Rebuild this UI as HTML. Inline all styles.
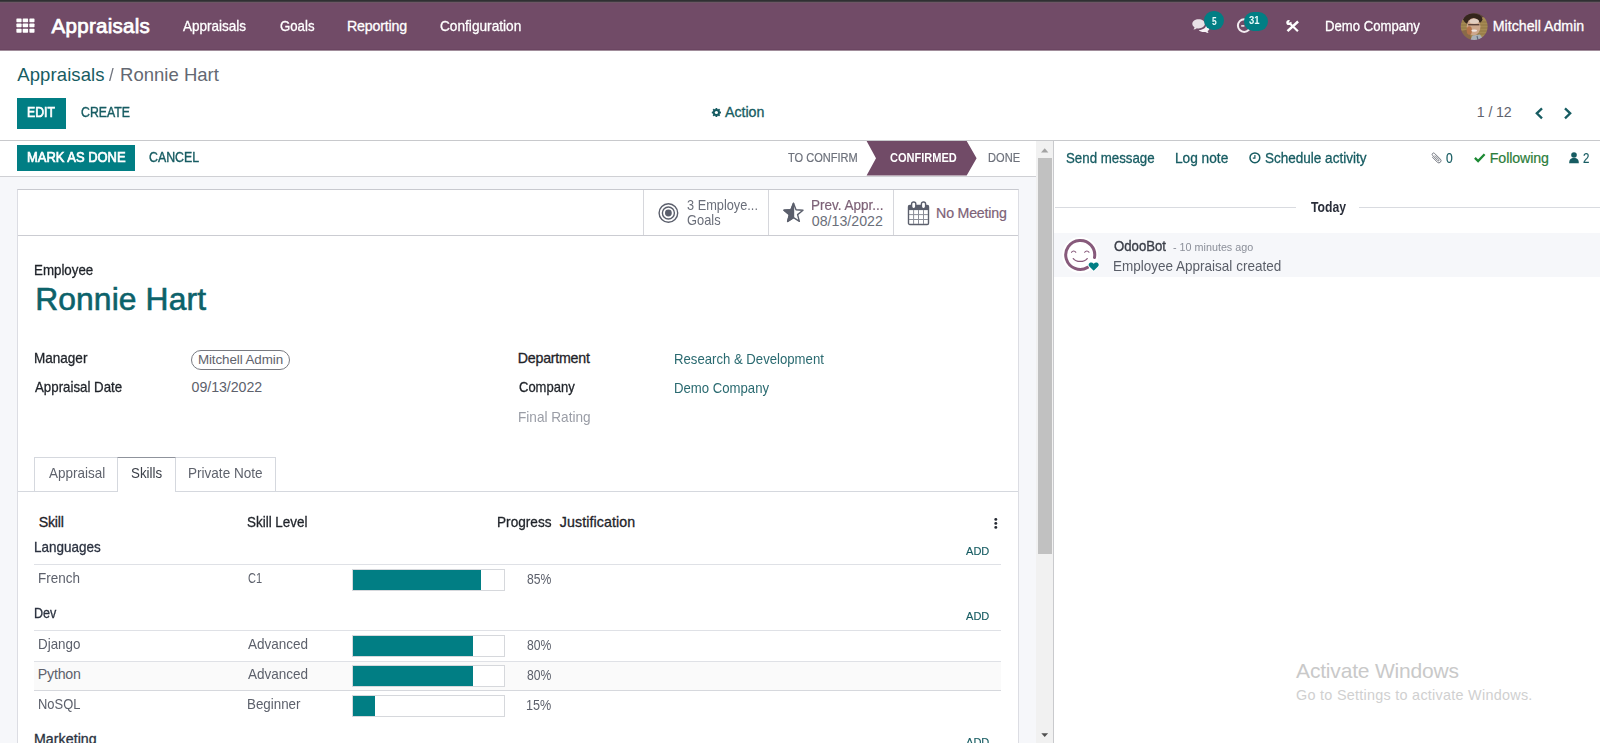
<!DOCTYPE html>
<html lang="en">
<head>
<meta charset="utf-8">
<title>Odoo - Appraisals / Ronnie Hart</title>
<style>

html,body{margin:0;padding:0}
body{position:relative;width:1600px;height:743px;overflow:hidden;background:#fff;
 font-family:"Liberation Sans",sans-serif;font-size:14px;color:#5d616c;}
div,span,a,i,b,button,header,main,aside,section,nav,ul,li,table{box-sizing:border-box}
.abs,.t,svg.ic{position:absolute}
.t{white-space:pre;line-height:1;transform-origin:0 0;margin:0;padding:0;font-weight:400;text-decoration:none;}
.grp{position:absolute;left:0;top:0;width:0;height:0}
#topline{left:0;top:0;width:1600px;height:3px;background:linear-gradient(#2f3032 0,#2f3032 1px,#3f3b41 1px,#3f3b41 2px,#6d5664 2px,#6d5664 3px)}
#navbar{left:0;top:2px;width:1600px;height:48px;background:#714B67;border-bottom:1px solid #6b4561}
#navedge{left:0;top:50px;width:1600px;height:1px;background:#a18d9b}
#cp{left:0;top:50px;width:1600px;height:91px;background:#fff;border-bottom:1px solid #c8c9cc}
#formbg{left:0;top:141px;width:1036px;height:602px;background:#f6f7fa}
#statusbar{left:0;top:141px;width:1036px;height:36px;background:#fff;border-bottom:1px solid #cfd0d4}
#sheet{left:17px;top:189px;width:1002px;height:600px;background:#fff;border:1px solid #dcdde3;border-top-color:#c8c9cf}
#bbox{left:18px;top:190px;width:1000px;height:46px;border-bottom:1px solid #cbccd2}
.vdiv{top:190px;width:1px;height:45px;background:#d6d7dc}
.btn-p{background:#017e84;border:0;border-radius:0;padding:0;margin:0}
.tab{top:457px;height:34px;border:1px solid #d5d8de;border-bottom:0;background:#fff}
.hl{height:1px;background:#dfe1e6}
.pb{left:351.600px;width:153px;height:22px;border:1px solid #d6d8dc;background:#fff}
.pb b{display:block;height:20px;background:#017e84}
#sbar{left:1036px;top:141px;width:17px;height:602px;background:#f1f1f1}
#sthumb{left:1038px;top:158px;width:14px;height:396px;background:#c1c1c1}
#chline{left:1053px;top:141px;width:1px;height:602px;background:#c9cacd}
#chatter{left:1054px;top:141px;width:546px;height:602px;background:#fff}
#msg{left:1054px;top:233px;width:546px;height:44px;background:#f6f7fa}
.pill{left:190.500px;top:350px;width:99.500px;height:19.500px;border:1px solid #787a81;border-radius:10px;background:#fff}
.badge{background:#017e84;border-radius:10px}

</style>
</head>
<body>

<header id="navbar" class="abs"></header>
<div id="topline" class="abs"></div>
<nav id="nav-items" class="grp">
<svg class="ic" style="left:16px;top:18px" width="20" height="16" viewBox="0 0 20 16">
 <g fill="#fff">
  <rect x="0.4" y="0.4" width="5.2" height="3.9" rx="0.700"/><rect x="6.7" y="0.4" width="5.4" height="3.9" rx="0.700"/><rect x="13.4" y="0.4" width="5.1" height="3.9" rx="0.700"/>
  <rect x="0.4" y="5.6" width="5.2" height="3.7" rx="0.700"/><rect x="6.7" y="5.6" width="5.4" height="3.7" rx="0.700"/><rect x="13.4" y="5.6" width="5.1" height="3.7" rx="0.700"/>
  <rect x="0.4" y="10.7" width="5.2" height="4.0" rx="0.700"/><rect x="6.7" y="10.7" width="5.4" height="4.0" rx="0.700"/><rect x="13.4" y="10.7" width="5.1" height="4.0" rx="0.700"/>
 </g>
</svg>
<!-- messaging icon -->
<svg class="ic" style="left:1190.600px;top:17.400px" width="22" height="18" viewBox="0 0 22 18">
 <path fill="#e9e1e7" d="M7.6 2.2c3.5 0 6.3 2 6.3 4.6s-2.8 4.6-6.3 4.6c-.6 0-1.2-.1-1.7-.2-1 .8-2.200 1.300-3.500 1.400.5-.6 1-1.400 1.100-2.300C2.100 9.500 1.300 8.200 1.300 6.800c0-2.600 2.800-4.600 6.300-4.600z"/>
 <path fill="#f7f2f6" d="M15.300 7.400c1.900.7 3.200 2.100 3.200 3.700 0 1.200-.7 2.300-1.900 3 .1.800.5 1.500 1 2-1.200-.1-2.300-.5-3.200-1.200-.5.100-1 .100-1.500.100-2.200 0-4.100-.8-5.100-2.100 4.100.100 7.400-2.200 7.500-5.500z"/>
</svg>
<span class="abs badge" style="left:1203.500px;top:11.300px;width:20px;height:19px"></span>
<!-- activity icon -->
<svg class="ic" style="left:1236px;top:17px" width="17" height="17" viewBox="0 0 17 17">
 <circle cx="8.2" cy="8.6" r="6.3" fill="none" stroke="#f3ecf1" stroke-width="2"/>
 <path d="M8.400 8.900H5.200" fill="none" stroke="#f3ecf1" stroke-width="1.600"/>
</svg>
<span class="abs badge" style="left:1244px;top:12px;width:24px;height:18.5px"></span>
<!-- debug / tools icon -->
<svg class="ic" style="left:1285px;top:19px" width="16" height="15" viewBox="0 0 16 15">
 <path d="M2.500 12.200L13.100 2.500" stroke="#fff" stroke-width="2.500" fill="none"/>
 <path d="M5.400 5L12.900 12.200" stroke="#fff" stroke-width="2.200" fill="none"/>
 <circle cx="3.900" cy="3.500" r="2.600" fill="#fff"/>
 <path d="M3.600 3.700L5.700 -0.300 7.500 2.600z" fill="#714B67"/>
</svg>
<!-- avatar -->
<svg class="ic" style="left:1460px;top:12px" width="29" height="29" viewBox="0 0 29 29">
 <defs>
  <clipPath id="avc"><circle cx="14.200" cy="14.500" r="13.400"/></clipPath>
  <filter id="avb" x="-10%" y="-10%" width="120%" height="120%"><feGaussianBlur stdDeviation="0.700"/></filter>
 </defs>
 <g clip-path="url(#avc)">
  <g filter="url(#avb)">
   <rect x="-2" y="-2" width="33" height="33" fill="#a58a52"/>
   <ellipse cx="13" cy="1.500" rx="16" ry="5" fill="#5e463a"/>
   <path d="M0 10h29M0 13h29M0 16h29M0 19h29M0 22h29" stroke="#8f7543" stroke-width="0.900"/>
   <path d="M-1 20L9 17 12 30H-1z" fill="#8a6a48"/>
   <ellipse cx="12.800" cy="7.200" rx="9.600" ry="5.800" fill="#34251f"/>
   <ellipse cx="13.600" cy="14.600" rx="6.900" ry="8.600" fill="#cda78c"/>
   <ellipse cx="14.200" cy="9.200" rx="4.600" ry="2.500" fill="#e2cec1"/>
   <ellipse cx="9.300" cy="18.500" rx="2.600" ry="4.200" fill="#b4734a"/>
   <path d="M8.200 12.700h11.200" stroke="#5c433b" stroke-width="1.400"/>
   <ellipse cx="14.200" cy="18.600" rx="2.900" ry="1.200" fill="#f1e8e3"/>
   <path d="M9.500 30L12.500 23.500 20 22.500 25 30z" fill="#aab0b6"/>
   <path d="M17 24l1.500 6" stroke="#5d6b7c" stroke-width="1.200"/>
  </g>
 </g>
</svg>
<a class="t" style="left:51.60px;top:16.00px;font-size:20.5px;letter-spacing:0.270px;color:#fff;-webkit-text-stroke:0.75px currentColor">Appraisals</a>
<a class="t" style="left:183.30px;top:19.00px;font-size:14.2px;color:#fff;-webkit-text-stroke:0.3px currentColor;transform:scaleX(0.9523)">Appraisals</a>
<a class="t" style="left:280.30px;top:19.00px;font-size:14.2px;color:#fff;-webkit-text-stroke:0.3px currentColor;transform:scaleX(0.9305)">Goals</a>
<a class="t" style="left:346.90px;top:19.00px;font-size:14.2px;letter-spacing:-0.155px;color:#fff;-webkit-text-stroke:0.3px currentColor">Reporting</a>
<a class="t" style="left:439.90px;top:19.00px;font-size:14.2px;color:#fff;-webkit-text-stroke:0.3px currentColor;transform:scaleX(0.9627)">Configuration</a>
<span class="t" style="left:1211.80px;top:15.50px;font-size:10.5px;font-weight:700;color:#e8fbfb;transform:scaleX(0.7994)">5</span>
<span class="t" style="left:1249.40px;top:15.00px;font-size:10.5px;font-weight:700;color:#e8fbfb;transform:scaleX(0.9031)">31</span>
<span class="t" style="left:1325.37px;top:19.00px;font-size:14.2px;color:#fff;-webkit-text-stroke:0.3px currentColor;transform:scaleX(0.9256)">Demo Company</span>
<span class="t" style="left:1492.80px;top:19.00px;font-size:14.2px;letter-spacing:-0.006px;color:#fff;-webkit-text-stroke:0.3px currentColor">Mitchell Admin</span>
</nav>

<section id="cp" class="abs"></section>
<div id="navedge" class="abs"></div>
<div id="cp-items" class="grp">
<button class="abs btn-p" style="left:17px;top:98px;width:49px;height:31px"></button>
<a class="t" style="left:17.30px;top:65.50px;font-size:18.5px;letter-spacing:0.095px;color:#175c62">Appraisals</a>
<span class="t" style="left:109.20px;top:65.50px;font-size:18.5px;color:#70747e;transform:scaleX(0.9166)">/</span>
<span class="t" style="left:120.10px;top:65.50px;font-size:18.5px;letter-spacing:0.012px;color:#646872">Ronnie Hart</span>
<span class="t" style="left:26.94px;top:105.30px;font-size:14.2px;color:#fff;-webkit-text-stroke:0.7px currentColor;transform:scaleX(0.8622)">EDIT</span>
<span class="t" style="left:80.90px;top:105.30px;font-size:14.2px;color:#175c62;-webkit-text-stroke:0.4px currentColor;transform:scaleX(0.8673)">CREATE</span>
<span class="t" style="left:725.00px;top:104.90px;font-size:14.2px;letter-spacing:-0.029px;color:#175c62;-webkit-text-stroke:0.3px currentColor">Action</span>
<span class="t" style="left:1476.80px;top:104.50px;font-size:14.2px;letter-spacing:-0.122px;color:#5f636d">1 / 12</span>
<svg class="ic" style="left:711px;top:107px" width="11" height="11" viewBox="0 0 11 11">
 <g fill="#175c62">
  <circle cx="5.400" cy="5.500" r="3.500"/>
  <g id="teeth">
   <rect x="4.500" y="0.900" width="1.800" height="9.200" rx="0.300"/>
   <rect x="4.500" y="0.900" width="1.800" height="9.200" rx="0.300" transform="rotate(45 5.400 5.500)"/>
   <rect x="4.500" y="0.900" width="1.800" height="9.200" rx="0.300" transform="rotate(90 5.400 5.500)"/>
   <rect x="4.500" y="0.900" width="1.800" height="9.200" rx="0.300" transform="rotate(135 5.400 5.500)"/>
  </g>
 </g>
 <circle cx="5.400" cy="5.500" r="1.600" fill="#fff"/>
</svg>
<svg class="ic" style="left:1533px;top:106px" width="12" height="15" viewBox="0 0 12 15">
 <path d="M9 2.300L3.800 7.300 9 12.300" fill="none" stroke="#175c62" stroke-width="2.300"/>
</svg>
<svg class="ic" style="left:1562px;top:106px" width="12" height="15" viewBox="0 0 12 15">
 <path d="M3 2.300L8.200 7.300 3 12.300" fill="none" stroke="#175c62" stroke-width="2.300"/>
</svg>
</div>

<main id="formbg" class="abs"></main>
<div id="statusbar" class="abs"></div>
<div id="status-items" class="grp">
<button class="abs btn-p" style="left:17px;top:145px;width:118px;height:26px"></button>
<svg class="ic" style="left:860px;top:141px" width="120" height="35" viewBox="0 0 120 35">
 <path d="M6.600 0H106.700L116.600 17.200 106.700 34.400H6.600L16 17.200z" fill="#714B67"/>
</svg>
<span class="t" style="left:26.89px;top:149.50px;font-size:14.2px;color:#fff;-webkit-text-stroke:0.7px currentColor;transform:scaleX(0.9122)">MARK AS DONE</span>
<span class="t" style="left:149.10px;top:149.50px;font-size:14.2px;color:#175c62;-webkit-text-stroke:0.4px currentColor;transform:scaleX(0.8704)">CANCEL</span>
<span class="t" style="left:788.30px;top:151.80px;font-size:12.6px;color:#6d717b;-webkit-text-stroke:0.2px currentColor;transform:scaleX(0.8780)">TO CONFIRM</span>
<span class="t" style="left:889.90px;top:151.80px;font-size:12.6px;font-weight:700;color:#fff;transform:scaleX(0.8757)">CONFIRMED</span>
<span class="t" style="left:988.42px;top:151.80px;font-size:12.6px;color:#6d717b;-webkit-text-stroke:0.2px currentColor;transform:scaleX(0.8802)">DONE</span>
</div>

<div id="sheet" class="abs"></div>
<div id="bbox" class="abs"></div>
<div id="sheet-items" class="grp">
<span class="abs vdiv" style="left:643px"></span>
<span class="abs vdiv" style="left:768px"></span>
<span class="abs vdiv" style="left:893px"></span>
<!-- goals (bullseye) -->
<svg class="ic" style="left:657px;top:202px" width="23" height="23" viewBox="0 0 23 23">
 <circle cx="11.400" cy="11" r="9.300" fill="none" stroke="#5b5f6c" stroke-width="1.400"/>
 <circle cx="11.400" cy="11" r="6" fill="none" stroke="#5b5f6c" stroke-width="1.400"/>
 <circle cx="11.400" cy="11" r="3.400" fill="#5b5f6c"/>
</svg>
<!-- star half -->
<svg class="ic" style="left:781px;top:200px" width="25" height="24" viewBox="0 0 25 24">
 <path d="M12.50 3.30 L15.03 9.82 L22.01 10.21 L16.59 14.63 L18.38 21.39 L12.50 17.60 L6.62 21.39 L8.41 14.63 L2.99 10.21 L9.97 9.82z" fill="none" stroke="#5b5f6c" stroke-width="1.400" stroke-linejoin="round"/>
 <path d="M12.50 3.30 L12.50 17.60 L6.62 21.39 L8.41 14.63 L2.99 10.21 L9.97 9.82z" fill="#5b5f6c" stroke="#5b5f6c" stroke-width="1.400" stroke-linejoin="round"/>
</svg>
<!-- calendar -->
<svg class="ic" style="left:907px;top:201px" width="24" height="25" viewBox="0 0 24 25">
 <rect x="1.500" y="4.500" width="20" height="19" rx="1.300" fill="#fff" stroke="#5b5f6c" stroke-width="1.400"/>
 <rect x="1.500" y="4.500" width="20" height="4.600" fill="#5b5f6c"/>
 <g stroke="#8b8e98" stroke-width="1">
  <path d="M6.600 9v14M11.500 9v14M16.500 9v14M2 13.600h19M2 18.500h19"/>
 </g>
 <rect x="4.600" y="1" width="4.200" height="6.600" rx="2" fill="#fff" stroke="#5b5f6c" stroke-width="1.400"/>
 <rect x="14.400" y="1" width="4.200" height="6.600" rx="2" fill="#fff" stroke="#5b5f6c" stroke-width="1.400"/>
</svg>
<span class="t" style="left:686.60px;top:197.60px;font-size:14.2px;color:#6b6f7a;transform:scaleX(0.8997)">3 Employe...</span>
<span class="t" style="left:686.80px;top:213.40px;font-size:14.2px;color:#6b6f7a;transform:scaleX(0.9062)">Goals</span>
<span class="t" style="left:810.65px;top:197.70px;font-size:14.2px;color:#7d6277;-webkit-text-stroke:0.2px currentColor;transform:scaleX(0.9516)">Prev. Appr...</span>
<span class="t" style="left:811.80px;top:213.60px;font-size:14.2px;letter-spacing:0.008px;color:#6b6f7a">08/13/2022</span>
<span class="t" style="left:936.10px;top:205.50px;font-size:14.2px;letter-spacing:-0.208px;color:#7d6277;-webkit-text-stroke:0.2px currentColor">No Meeting</span>

<span class="abs pill"></span>
<span class="t" style="left:34.16px;top:262.80px;font-size:14.2px;color:#1f2329;-webkit-text-stroke:0.3px currentColor;transform:scaleX(0.9389)">Employee</span>
<span class="t" style="left:35.20px;top:284.00px;font-size:31.8px;letter-spacing:0.116px;color:#0c626a;-webkit-text-stroke:0.6px currentColor">Ronnie Hart</span>
<span class="t" style="left:34.15px;top:351.00px;font-size:14.2px;color:#1f2329;-webkit-text-stroke:0.3px currentColor;transform:scaleX(0.9534)">Manager</span>
<span class="t" style="left:197.90px;top:353.00px;font-size:13.4px;letter-spacing:-0.083px;color:#5f636d">Mitchell Admin</span>
<span class="t" style="left:35.10px;top:380.10px;font-size:14.2px;color:#1f2329;-webkit-text-stroke:0.3px currentColor;transform:scaleX(0.9359)">Appraisal Date</span>
<span class="t" style="left:191.60px;top:380.10px;font-size:14.2px;letter-spacing:-0.047px;color:#5d616c">09/13/2022</span>
<span class="t" style="left:517.80px;top:351.20px;font-size:14.2px;letter-spacing:-0.231px;color:#1f2329;-webkit-text-stroke:0.3px currentColor">Department</span>
<a class="t" style="left:674.37px;top:351.50px;font-size:14.2px;color:#2a6a70;transform:scaleX(0.9270)">Research &amp; Development</a>
<span class="t" style="left:518.80px;top:380.20px;font-size:14.2px;color:#1f2329;-webkit-text-stroke:0.3px currentColor;transform:scaleX(0.9166)">Company</span>
<a class="t" style="left:674.37px;top:380.50px;font-size:14.2px;color:#2a6a70;transform:scaleX(0.9275)">Demo Company</a>
<span class="t" style="left:517.84px;top:409.50px;font-size:14.2px;color:#9a9da6;transform:scaleX(0.9590)">Final Rating</span>

<!-- notebook tabs -->
<span class="abs tab" style="left:34px;width:84px"></span>
<span class="abs tab" style="left:175px;width:101px"></span>
<span class="abs hl" style="left:18px;top:491px;width:1000px;background:#d5d8de"></span>
<span class="abs tab" style="left:117px;width:59px;border-top-color:#8f939c;height:35px"></span>
<span class="t" style="left:48.60px;top:466.30px;font-size:14.2px;color:#5f636d;transform:scaleX(0.9491)">Appraisal</span>
<span class="t" style="left:131.30px;top:466.30px;font-size:14.2px;color:#3c4049;transform:scaleX(0.9389)">Skills</span>
<span class="t" style="left:188.05px;top:466.30px;font-size:14.2px;color:#5f636d;transform:scaleX(0.9548)">Private Note</span>

<!-- skills list -->
<span class="abs hl" style="left:34px;top:564px;width:967px"></span>
<span class="abs hl" style="left:34px;top:630px;width:967px"></span>
<span class="abs" style="left:34px;top:661px;width:967px;height:30px;background:#fafafa;border-top:1px solid #dfe1e6;border-bottom:1px solid #d6d8dd"></span>
<span class="abs pb" style="top:569px"><b style="width:85%"></b></span>
<span class="abs pb" style="top:635px"><b style="width:80%"></b></span>
<span class="abs pb" style="top:665px"><b style="width:80%"></b></span>
<span class="abs pb" style="top:695px"><b style="width:15%"></b></span>
<svg class="ic" style="left:992.800px;top:517.300px" width="6" height="13" viewBox="0 0 6 13">
 <g fill="#262a33"><circle cx="2.800" cy="2.400" r="1.450"/><circle cx="2.800" cy="6.400" r="1.450"/><circle cx="2.800" cy="10.400" r="1.450"/></g>
</svg>
<span class="t" style="left:38.70px;top:515.20px;font-size:14.2px;letter-spacing:-0.216px;color:#1f2329;-webkit-text-stroke:0.3px currentColor">Skill</span>
<span class="t" style="left:247.20px;top:515.20px;font-size:14.2px;color:#1f2329;-webkit-text-stroke:0.3px currentColor;transform:scaleX(0.9463)">Skill Level</span>
<span class="t" style="left:496.84px;top:515.20px;font-size:14.2px;color:#1f2329;-webkit-text-stroke:0.3px currentColor;transform:scaleX(0.9607)">Progress</span>
<span class="t" style="left:559.80px;top:515.20px;font-size:14.2px;letter-spacing:0.105px;color:#1f2329;-webkit-text-stroke:0.3px currentColor">Justification</span>
<span class="t" style="left:34.15px;top:540.00px;font-size:14.2px;color:#2b3240;-webkit-text-stroke:0.3px currentColor;transform:scaleX(0.9490)">Languages</span>
<span class="t" style="left:965.70px;top:544.70px;font-size:11.6px;color:#175c62;-webkit-text-stroke:0.15px currentColor;transform:scaleX(0.9539)">ADD</span>
<span class="t" style="left:37.75px;top:570.80px;font-size:14.2px;color:#5d616c;transform:scaleX(0.9488)">French</span>
<span class="t" style="left:247.60px;top:570.80px;font-size:14.2px;color:#5d616c;transform:scaleX(0.7781)">C1</span>
<span class="t" style="left:526.70px;top:572.00px;font-size:14.2px;color:#5d616c;transform:scaleX(0.8579)">85%</span>
<span class="t" style="left:34.11px;top:605.80px;font-size:14.2px;color:#2b3240;-webkit-text-stroke:0.3px currentColor;transform:scaleX(0.8870)">Dev</span>
<span class="t" style="left:965.70px;top:610.20px;font-size:11.6px;color:#175c62;-webkit-text-stroke:0.15px currentColor;transform:scaleX(0.9539)">ADD</span>
<span class="t" style="left:37.76px;top:636.70px;font-size:14.2px;color:#5d616c;transform:scaleX(0.9438)">Django</span>
<span class="t" style="left:247.50px;top:636.70px;font-size:14.2px;color:#5d616c;transform:scaleX(0.9531)">Advanced</span>
<span class="t" style="left:526.70px;top:638.00px;font-size:14.2px;color:#5d616c;transform:scaleX(0.8579)">80%</span>
<span class="t" style="left:37.70px;top:666.50px;font-size:14.2px;letter-spacing:-0.176px;color:#5d616c">Python</span>
<span class="t" style="left:247.50px;top:666.50px;font-size:14.2px;color:#5d616c;transform:scaleX(0.9531)">Advanced</span>
<span class="t" style="left:526.70px;top:668.00px;font-size:14.2px;color:#5d616c;transform:scaleX(0.8579)">80%</span>
<span class="t" style="left:37.79px;top:697.00px;font-size:14.2px;color:#5d616c;transform:scaleX(0.9115)">NoSQL</span>
<span class="t" style="left:246.56px;top:697.00px;font-size:14.2px;color:#5d616c;transform:scaleX(0.9416)">Beginner</span>
<span class="t" style="left:525.81px;top:698.00px;font-size:14.2px;color:#5d616c;transform:scaleX(0.8888)">15%</span>
<span class="t" style="left:34.00px;top:731.60px;font-size:14.2px;letter-spacing:0.049px;color:#2b3240;-webkit-text-stroke:0.3px currentColor">Marketing</span>
<span class="t" style="left:965.70px;top:736.00px;font-size:11.6px;color:#175c62;-webkit-text-stroke:0.15px currentColor;transform:scaleX(0.9539)">ADD</span>
</div>

<!-- browser scrollbar of the form area -->
<div id="sbar" class="abs"></div>
<div id="sthumb" class="abs"></div>
<svg class="ic" style="left:1040px;top:147px" width="10" height="7" viewBox="0 0 10 7"><path d="M1 5.600L4.700 1.200 8.400 5.600z" fill="#a3a3a3"/></svg>
<svg class="ic" style="left:1040px;top:732px" width="10" height="7" viewBox="0 0 10 7"><path d="M1.300 1.200L4.700 5 8.100 1.200z" fill="#505050"/></svg>
<div id="chline" class="abs"></div>

<aside id="chatter" class="abs"></aside>
<div id="msg" class="abs"></div>
<div id="chatter-items" class="grp">
<!-- clock-o -->
<svg class="ic" style="left:1248px;top:151px" width="14" height="14" viewBox="0 0 14 14">
 <circle cx="6.900" cy="6.800" r="4.900" fill="none" stroke="#175c62" stroke-width="1.500"/>
 <path d="M6.900 3.900v3.200H4.800" fill="none" stroke="#175c62" stroke-width="1.200"/>
</svg>
<!-- paperclip -->
<svg class="ic" style="left:1429px;top:151px" width="14" height="14" viewBox="0 0 14 14">
 <g transform="translate(7.100 6.900) rotate(-45) scale(0.880)">
  <path d="M-2.400 -3.500V4.500A2.400 2.400 0 0 0 2.400 4.500V-4.800A1.600 1.600 0 0 0 -0.800 -4.800V3.600A0.850 0.850 0 0 0 0.900 3.600V-2.500" fill="none" stroke="#71757e" stroke-width="1.050" stroke-linecap="round"/>
 </g>
</svg>
<!-- check -->
<svg class="ic" style="left:1473px;top:151px" width="14" height="13" viewBox="0 0 14 13">
 <path d="M1.900 6.900l3.200 3.200 6.500-6.900" fill="none" stroke="#1d8a34" stroke-width="2.300"/>
</svg>
<!-- user -->
<svg class="ic" style="left:1568px;top:151px" width="12" height="13" viewBox="0 0 12 13">
 <circle cx="6" cy="4" r="2.800" fill="#175c62"/>
 <path d="M1.200 12.200c0-3.700 1.400-5.200 4.800-5.200s4.800 1.500 4.800 5.200z" fill="#175c62"/>
</svg>
<span class="abs hl" style="left:1055px;top:207px;width:241px;background:#d9dbe0"></span>
<span class="abs hl" style="left:1359px;top:207px;width:241px;background:#d9dbe0"></span>
<!-- OdooBot avatar -->
<svg class="ic" style="left:1060px;top:235px" width="42" height="40" viewBox="0 0 42 40">
 <circle cx="20.200" cy="20" r="18" fill="#fff"/>
 <path d="M27.600 32.400A14.500 14.500 0 1 1 34.500 22.500" fill="none" stroke="#875A7B" stroke-width="3" stroke-linecap="round"/>
 <path d="M11.500 17.300c1-1.700 3.300-1.700 4.300 0M24.700 17.300c1-1.700 3.300-1.700 4.300 0" fill="none" stroke="#875A7B" stroke-width="1.100" stroke-linecap="round"/>
 <path d="M13.300 23.600c3 3.800 10.900 3.800 13.900 0" fill="none" stroke="#875A7B" stroke-width="1.300" stroke-linecap="round"/>
 <path d="M33.700 35.800l-4.300-4.200c-2.400-2.600 1.600-5.800 4.300-2.900 2.700-2.900 6.700.3 4.300 2.900z" fill="#017e84" stroke="#fff" stroke-width="1.600" paint-order="stroke"/>
</svg>
<span class="t" style="left:1066.00px;top:150.60px;font-size:14.2px;color:#175c62;-webkit-text-stroke:0.3px currentColor;transform:scaleX(0.9360)">Send message</span>
<span class="t" style="left:1174.94px;top:150.60px;font-size:14.2px;color:#175c62;-webkit-text-stroke:0.3px currentColor;transform:scaleX(0.9642)">Log note</span>
<span class="t" style="left:1265.10px;top:150.60px;font-size:14.2px;color:#175c62;-webkit-text-stroke:0.3px currentColor;transform:scaleX(0.9527)">Schedule activity</span>
<span class="t" style="left:1445.50px;top:150.60px;font-size:14.2px;color:#175c62;-webkit-text-stroke:0.2px currentColor;transform:scaleX(0.8500)">0</span>
<span class="t" style="left:1489.80px;top:150.60px;font-size:14.2px;letter-spacing:-0.093px;color:#2c7d3b;-webkit-text-stroke:0.2px currentColor">Following</span>
<span class="t" style="left:1583.00px;top:150.60px;font-size:14.2px;color:#175c62;-webkit-text-stroke:0.2px currentColor;transform:scaleX(0.8125)">2</span>
<span class="t" style="left:1310.50px;top:199.60px;font-size:14.2px;font-weight:700;color:#2a2e3a;transform:scaleX(0.8594)">Today</span>
<span class="t" style="left:1113.90px;top:238.60px;font-size:14.2px;color:#3b3f49;-webkit-text-stroke:0.35px currentColor;transform:scaleX(0.9291)">OdooBot</span>
<span class="t" style="left:1173.00px;top:240.60px;font-size:11.6px;color:#8b8f99;transform:scaleX(0.9289)">- 10 minutes ago</span>
<span class="t" style="left:1112.95px;top:258.80px;font-size:14.2px;color:#5a5e68;transform:scaleX(0.9520)">Employee Appraisal created</span>
</div>
<div id="watermark" class="grp">
<span class="t" style="left:1296.10px;top:659.70px;font-size:21px;letter-spacing:-0.189px;color:#c9c9c9">Activate Windows</span>
<span class="t" style="left:1296.10px;top:687.90px;font-size:14.4px;letter-spacing:0.268px;color:#d0d0d0">Go to Settings to activate Windows.</span>
</div>

</body>
</html>
